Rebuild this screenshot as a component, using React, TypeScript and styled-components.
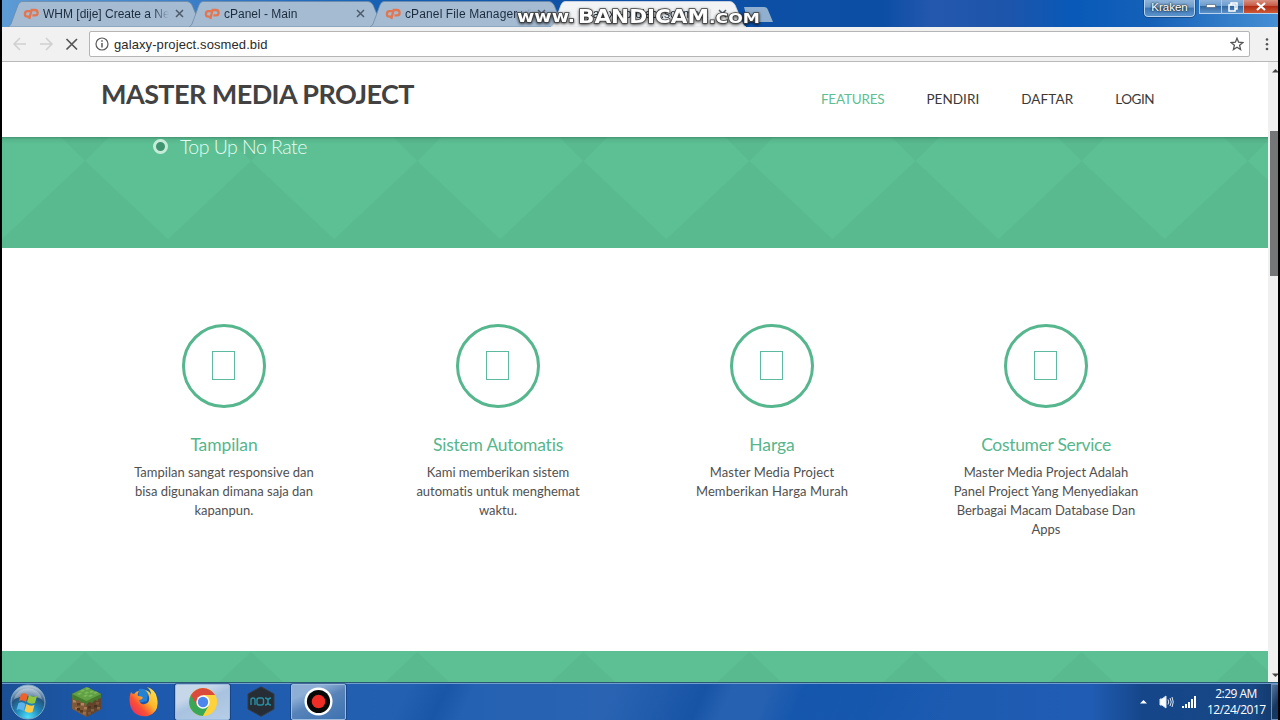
import React from 'react';
import styled, { createGlobalStyle } from 'styled-components';

const Global = createGlobalStyle`
  * { box-sizing: border-box; }
  body { margin: 0; background: #000; overflow: hidden; }
`;

const green = '#5dbf94';

const Screen = styled.div`
  position: relative;
  width: 1280px;
  height: 720px;
  display: flex;
  flex-direction: column;
  border-left: 2px solid #000;
  border-right: 2px solid #000;
  background: #fff;
  overflow: hidden;
  font-family: 'Liberation Sans', Arial, sans-serif;
`;

const TitleBar = styled.div`
  position: relative;
  display: flex;
  height: 27px;
  flex: none;
  padding-left: 6px;
  background: linear-gradient(90deg, #5d9bd5 0, #3c80c8 180px, #1560b4 380px, #0e52a8 560px, #0b4ea4 880px, #2458ae 930px, #1c55ab 1010px, #0859b8 1070px, #1561b8 1150px, #468fd4 1276px);
`;

const TabShape = styled.div<{ $width: number }>`
  position: relative;
  flex: none;
  width: ${p => p.$width}px;
  height: 26px;
  margin: 1px -14px 0 0;
  svg.shape { display: block; }
`;

const TabContent = styled.div`
  position: absolute;
  inset: 0;
  display: flex;
  align-items: center;
  padding: 0 0 1px 15px;
  color: #1c2c3d;
`;

const TabTitle = styled.span<{ $width: number; $spacing?: number }>`
  width: ${p => p.$width}px;
  margin-left: 4px;
  font-size: 12px;
  letter-spacing: ${p => p.$spacing ?? 0}px;
  line-height: 16px;
  white-space: nowrap;
  overflow: hidden;
  mask-image: linear-gradient(90deg, #000 calc(100% - 22px), transparent calc(100% - 6px));
`;

const Watermark = styled.svg`
  position: absolute;
  left: 509px;
  top: 0;
  z-index: 3;
  filter: drop-shadow(0 1px 1.5px rgba(0, 0, 0, 0.8));
`;

const WindowControls = styled.div`
  position: absolute;
  right: 0;
  top: 0;
  display: flex;
  align-items: flex-start;
`;

const UserButton = styled.div`
  width: 51px;
  height: 17px;
  margin-right: 4px;
  border: 1px solid #b9d3ec;
  border-top: 0;
  border-radius: 0 0 4px 4px;
  outline: 1px solid rgba(20, 50, 95, 0.5);
  background: linear-gradient(#8fb4da, #6c9bcd 45%, #3b74b4 50%, #5b93cc);
  color: #fff;
  font: 11.5px/15px 'Liberation Sans', Arial, sans-serif;
  text-align: center;
  text-shadow: 0 0 2px #222, 0 0 2px #222;
`;

const ControlButton = styled.div<{ $width: number; $close?: boolean }>`
  display: flex;
  align-items: center;
  justify-content: center;
  width: ${p => p.$width}px;
  height: 14px;
  border-bottom: 1px solid #b9d3ec;
  border-left: 1px solid #a9c6e4;
  background: ${p => p.$close
    ? 'linear-gradient(#d99080, #c65a45 45%, #b02c14 50%, #cf5a36)'
    : 'linear-gradient(#8db3da, #6b9bce 45%, #34699f 50%, #5a91c9)'};
`;

const Toolbar = styled.div`
  display: flex;
  align-items: center;
  height: 35px;
  flex: none;
  background: #f1f1f2;
  border-bottom: 1px solid #b9b9b9;
`;

const NavIcons = styled.div`
  display: flex;
  width: 87px;
  padding-left: 10px;
`;

const AddressBar = styled.div`
  display: flex;
  align-items: center;
  width: 1161px;
  height: 26px;
  padding: 0 5px;
  border: 1px solid #b5b5b5;
  border-radius: 2px;
  background: #fff;
`;

const Url = styled.span`
  flex: 1;
  margin-left: 5px;
  color: #2a2a2a;
  font-size: 13px;
  letter-spacing: 0.1px;
`;

const MenuIcon = styled.svg`
  margin-left: 12px;
`;

const Viewport = styled.div`
  display: flex;
  height: 620px;
  flex: none;
`;

const Page = styled.main`
  width: 1266px;
  flex: none;
  font-family: Lato, sans-serif;
  font-variant-ligatures: none;
  background: #fff;
`;

const SiteHeader = styled.header`
  display: flex;
  justify-content: space-between;
  height: 75px;
  padding: 0 114px 0 99px;
  background: #fff;
`;

const Brand = styled.h1`
  margin: 15px 0 0;
  color: #424242;
  font-size: 27px;
  line-height: 34px;
  font-weight: 700;
  letter-spacing: -0.57px;
  white-space: nowrap;
`;

const Menu = styled.nav`
  display: flex;
  gap: 42px;
  padding-top: 28px;
`;

const MenuItem = styled.a<{ $active?: boolean; $spacing: number }>`
  color: ${p => (p.$active ? green : '#3a3a3a')};
  font-size: 13.5px;
  line-height: 19px;
  letter-spacing: ${p => p.$spacing}px;
  white-space: nowrap;
`;

const GreenBand = styled.section<{ $height: number }>`
  position: relative;
  height: ${p => p.$height}px;
  background: ${green};
  overflow: hidden;
`;

const Pattern = styled.svg`
  position: absolute;
  inset: 0;
`;

const BandShadow = styled.div`
  position: absolute;
  inset: 0 0 auto;
  height: 7px;
  background: linear-gradient(rgba(30, 90, 65, 0.4), rgba(30, 90, 65, 0.1) 35%, transparent);
`;

const Bullet = styled.div`
  position: relative;
  display: flex;
  align-items: center;
  height: 19px;
  padding-left: 151px;
  color: #e4fbf0;
  font-size: 19.5px;
  font-weight: 300;
  line-height: 19px;
  letter-spacing: -0.53px;
`;

const BulletDot = styled.i`
  width: 15px;
  height: 15px;
  margin-right: 12px;
  border: 3px solid #c5ecd9;
  border-radius: 50%;
  background: #409470;
`;

const Features = styled.section`
  display: grid;
  grid-template-columns: repeat(4, 274px);
  height: 403px;
  padding: 75px 0 0 85px;
`;

const Feature = styled.article`
  display: flex;
  flex-direction: column;
  align-items: center;
`;

const IconRing = styled.div`
  display: flex;
  align-items: center;
  justify-content: center;
  width: 84px;
  height: 84px;
  margin-top: 1px;
  border: 3px solid #56b68d;
  border-radius: 50%;
`;

const MissingGlyph = styled.i`
  width: 23px;
  height: 29px;
  margin: 0 1px 1px 0;
  border: 1px solid #5dbaa0;
`;

const FeatureTitle = styled.h3<{ $spacing: number }>`
  margin: 25px 0 6px;
  color: #56b68d;
  font-size: 17.5px;
  line-height: 24px;
  font-weight: 400;
  letter-spacing: ${p => p.$spacing}px;
  white-space: nowrap;
`;

const FeatureText = styled.p<{ $spacing?: number }>`
  margin: 0;
  color: #505050;
  font-size: 13px;
  line-height: 18.9px;
  letter-spacing: ${p => p.$spacing ?? 0}px;
  text-align: center;
  white-space: pre-line;
`;

const ScrollTrack = styled.div`
  display: flex;
  flex-direction: column;
  justify-content: space-between;
  width: 10px;
  padding: 6px 0 4px;
  background: #f0f0f0;
`;

const ScrollThumb = styled.div`
  width: 8px;
  height: 145px;
  margin: 58px 0 auto 2px;
  background: #757677;
`;

const Taskbar = styled.footer`
  display: flex;
  align-items: center;
  height: 38px;
  flex: none;
  border-top: 1px solid #2a5a73;
  box-shadow: inset 0 1px #6f9cce;
  background:
    linear-gradient(115deg, transparent 370px, rgba(14, 75, 158, 0.5) 405px, transparent 430px, transparent 560px, rgba(14, 75, 158, 0.6) 640px, transparent 665px, transparent 700px, rgba(10, 80, 170, 0.5) 730px, transparent 870px),
    linear-gradient(90deg, #1b4f94 0, #1c59ac 110px, #2360b2 400px, #2963b2 600px, #2560b1 760px, #1a5aaf 860px, #205cb3 1090px, #15468a 1140px, #174784 1250px, #123766 1276px);
`;

const TaskSlot = styled.div<{ $open?: boolean; $bright?: boolean; $width: number; $after?: number }>`
  display: flex;
  align-items: center;
  justify-content: center;
  width: ${p => p.$width}px;
  height: 36px;
  margin-right: ${p => p.$after ?? 0}px;
  border: 1px solid ${p => (p.$open ? '#9dbddf' : 'transparent')};
  border-radius: 2px;
  background: ${p => p.$bright
    ? 'linear-gradient(155deg, #c7d7ea 30%, #a8c2e0 50%, #b6cde6)'
    : p.$open ? 'linear-gradient(155deg, #8daed5 25%, #5783b9 50%, #3d72b0)' : 'none'};
  box-shadow: ${p => (p.$open ? '0 0 0 1px rgba(15,45,90,.45)' : 'none')};
`;

const Tray = styled.div`
  display: flex;
  align-items: center;
  margin-left: auto;
`;

const TrayIcon = styled.svg<{ $after: number }>`
  margin-right: ${p => p.$after}px;
`;

const Clock = styled.div`
  width: 58px;
  margin-right: 6px;
  color: #fff;
  font: 12px/16px 'Open Sans', sans-serif;
  letter-spacing: -0.5px;
  text-align: center;
  white-space: nowrap;
`;

const ShowDesktop = styled.div`
  width: 7px;
  height: 36px;
  border: 1px solid #6d8db5;
  border-right: 0;
  background: linear-gradient(120deg, #54779f, #16375f 60%);
`;

function CpLogo() {
  return (
    <svg width="16" height="12" viewBox="0 0 16 12" fill="none" stroke="#e27650" strokeWidth="2.3">
      <path d="M7.6 3.2H4.6a2.700 2.700 0 0 0 0 5.4h1.6" />
      <path d="M6.3 11 8.6 2h3.3a2.600 2.600 0 0 1 0 5.4H9.4" />
    </svg>
  );
}

function CloseMark() {
  return (
    <svg width="9" height="9" viewBox="0 0 9 9" stroke="#4d5b6b" strokeWidth="1.5">
      <path d="m1 1 7 7M8 1 1 8" />
    </svg>
  );
}

function Tab({ title, width, spacing, active }: { title: string; width: number; spacing?: number; active?: boolean }) {
  const w = width;
  return (
    <TabShape $width={w}>
      <svg className="shape" width={w} height="26">
        <path
          d={`M0 26Q2 25 3 23L10 4Q11.500 .5 14 .5H${w - 16}Q${w - 13} .5 ${w - 11} 4L${w - 3} 23Q${w - 2} 25 ${w} 26Z`}
          fill={active ? '#f2f3f4' : '#a5bbd2'}
          stroke={active ? '#d4dbe3' : '#6f8ba9'}
          strokeWidth=".8"
        />
      </svg>
      <TabContent>
        {active ? <svg width="16" height="12" /> : <CpLogo />}
        <TabTitle $width={132} $spacing={spacing}>{title}</TabTitle>
        <CloseMark />
      </TabContent>
    </TabShape>
  );
}

function Triangles({ apexY, baseY, top }: { apexY: number; baseY: number; top?: boolean }) {
  const apexes = Array.from({ length: 9 }, (_, i) => 83 + i * 166.1);
  const half = baseY - apexY;
  return (
    <Pattern width="1266" height="111">
      {apexes.map(x => (
        <g key={x}>
          <path d={`M${x} ${apexY}l${half * 1.06} ${half}H${x - half * 1.06}Z`} fill="#59b98f" />
          {top && <path d={`M${x} ${apexY}l-24-24h48Z`} fill="#59b98f" />}
        </g>
      ))}
      {top && <path d="M0 102h1266v9H0Z" fill="#59b98f" />}
    </Pattern>
  );
}

function StartOrb() {
  return (
    <svg width="36" height="36" viewBox="0 0 36 36">
      <defs>
        <radialGradient id="orb" cx=".5" cy=".95" r=".9">
          <stop offset="0" stopColor="#4fe0fb" />
          <stop offset=".4" stopColor="#2089bb" />
          <stop offset=".7" stopColor="#25557f" />
          <stop offset="1" stopColor="#b0c5d8" />
        </radialGradient>
      </defs>
      <circle cx="18" cy="18" r="17" fill="url(#orb)" stroke="#7faac4" />
      <path d="M4 15a14.500 14.500 0 0 1 28 0Q18 9 4 15Z" fill="#fff" opacity=".33" />
      <path d="M11 10q4-2 7 1l-2 7q-4-3-7-1Z" fill="#ed622c" />
      <path d="M19 11q4 3 8 1l-2 7q-4 2-8-1Z" fill="#93c73f" />
      <path d="M8.500 19q4-2 7 1l-2 7q-4-3-7-1Z" fill="#5db4ed" />
      <path d="M16.500 20q4 3 8 1l-2 7q-4 2-8-1Z" fill="#fbc943" />
    </svg>
  );
}

function GrassBlock() {
  const specks = [[1, 13, '#b08761'], [5, 16, '#5c3c25'], [9, 16, '#b08761'], [3, 20, '#9a7049'], [8, 23, '#59391f'], [12, 20, '#a47a52'], [16, 19, '#513620'], [19, 22, '#80603f'], [24, 15, '#7b573a'], [22, 18, '#49301d'], [25, 20, '#8b6545'], [16, 25, '#78553a'], [5, 21, '#4f331d'], [11, 25, '#9a7049']] as const;
  const blades = [[8, 4], [13, 2], [17, 5], [21, 6], [5, 7], [11, 9], [16, 9], [12, 6]];
  return (
    <svg width="29" height="30" viewBox="0 0 29 30">
      <path d="m0 7 14.500-7L29 7v15l-14.500 8L0 22Z" fill="#805939" />
      <path d="M14.500 14 29 7v15l-14.500 8Z" fill="#62432b" />
      {specks.map(([x, y, c]) => <rect key={`${x}-${y}`} x={x} y={y} width="3" height="2.500" fill={c} />)}
      <path d="m0 7 14.500-7L29 7v4l-3 1v2l-3-1-3 3-3-1-2.500 3-3-3-2 1-3-3-3 1-3-3-1.500 1Z" fill="#467b2d" />
      <path d="m0 7 14.500-7L29 7l-14.500 7Z" fill="#61a044" />
      {blades.map(([x, y]) => <path key={`${x}-${y}`} d={`m${x} ${y} 3-1.400 2 1-3 1.400Z`} fill="#7cb95a" />)}
    </svg>
  );
}

function Firefox() {
  return (
    <svg width="30" height="30" viewBox="0 0 30 30">
      <defs>
        <linearGradient id="fox" x1="1" y1="0" x2="0" y2="1">
          <stop offset="0" stopColor="#fff04f" />
          <stop offset=".42" stopColor="#ffb52c" />
          <stop offset=".65" stopColor="#fa5233" />
          <stop offset="1" stopColor="#e51e75" />
        </linearGradient>
      </defs>
      <circle cx="15" cy="14" r="11.500" fill="#1957b5" />
      <path d="M10 2q7-1 9 4l-1 8-9 2Z" fill="#2482d5" />
      <path d="M2 5q1 2 3 2 2-3 5-3-2 3-1 5 4 0 5 2-2 2-4 2 1 5 6 4 5-1 4-7-1-5-4-7 5 1 6 5Q22 3 18 0q9 3 10 11 3 14-9 18-12 2-17-8Q-1 12 2 5Z" fill="url(#fox)" />
    </svg>
  );
}

function Chrome() {
  return (
    <svg width="28" height="28" viewBox="0 0 28 28">
      <circle cx="14" cy="14" r="14" fill="#fdd23b" />
      <path d="M14 14 1.900 7A14 14 0 0 0 14 28l6-10.500Z" fill="#3aa757" />
      <path d="M1.900 7A14 14 0 0 1 26.100 7H14v7L8 17.500Z" fill="#db4b3c" />
      <path d="M26.100 7.500A14 14 0 0 1 14 28l6-10.500V7.500Z" fill="#fdd23b" />
      <circle cx="14" cy="14" r="6.700" fill="#fff" />
      <circle cx="14" cy="14" r="5.200" fill="#4b87ed" />
    </svg>
  );
}

function Nox() {
  return (
    <svg width="28" height="31" viewBox="0 0 28 31" fill="none">
      <path d="M14 .8 27 8v15l-13 7.300L1 23V8Z" fill="#272d34" stroke="#353c42" />
      <path d="M4 19v-5q0-2 2-2t2 2v5M12 12h2.500q2 0 2 2v3q0 2-2 2H12q-2 0-2-2v-3q0-2 2-2ZM18 12q3 0 3 3.500T24 19M24 12q-3 0-3 3.500T18 19" stroke="#278fa3" strokeWidth="1.400" />
    </svg>
  );
}

function Recorder() {
  return (
    <svg width="29" height="29" viewBox="0 0 30 30">
      <circle cx="15" cy="15" r="14.500" fill="#fff" />
      <circle cx="15" cy="15" r="12" fill="#080808" />
      <circle cx="15" cy="15" r="7" fill="#ed2d26" />
    </svg>
  );
}

const menu = [
  { label: 'FEATURES', spacing: -0.2 },
  { label: 'PENDIRI', spacing: 0.05 },
  { label: 'DAFTAR', spacing: 0.1 },
  { label: 'LOGIN', spacing: -0.5 },
];

const features = [
  { title: 'Tampilan', spacing: -0.1, text: 'Tampilan sangat responsive dan\nbisa digunakan dimana saja dan\nkapanpun.' },
  { title: 'Sistem Automatis', spacing: -0.22, text: 'Kami memberikan sistem\nautomatis untuk menghemat\nwaktu.' },
  { title: 'Harga', spacing: -0.1, text: 'Master Media Project\nMemberikan Harga Murah', textSpacing: 0.1 },
  { title: 'Costumer Service', spacing: -0.33, text: 'Master Media Project Adalah\nPanel Project Yang Menyediakan\nBerbagai Macam Database Dan\nApps' },
];

export default function App() {
  return (
    <>
      <Global />
      <Screen>
        <TitleBar>
          <Tab title="WHM [dije] Create a New" width={195} />
          <Tab title="cPanel - Main" width={195} />
          <Tab title="cPanel File Manager v3" width={195} spacing={0.12} />
          <Tab title="galaxy-project.sosmed.bid" width={195} active />
          <svg width="44" height="27">
            <path d="M12 7h20q3 0 4 3l5 12H16Z" fill="#91b0cf" />
          </svg>
          <Watermark width="260" height="30" fill="#fff" stroke="#3c3c3c" strokeWidth="1.400" paintOrder="stroke" fontFamily="DejaVu Sans, sans-serif" fontWeight="700">
            <text x="6" y="22" fontSize="15" textLength="58" lengthAdjust="spacingAndGlyphs">www.</text>
            <text x="67" y="23" fontSize="20" textLength="131" lengthAdjust="spacingAndGlyphs">BANDICAM</text>
            <text x="198" y="22.500" fontSize="14" textLength="51" lengthAdjust="spacingAndGlyphs">.COM</text>
          </Watermark>
          <WindowControls>
            <UserButton>Kraken</UserButton>
            <ControlButton $width={22}>
              <svg width="10" height="5"><path d="M.5.5h9v3h-9Z" fill="#fff" stroke="#45566b" strokeWidth=".6" /></svg>
            </ControlButton>
            <ControlButton $width={22}>
              <svg width="10" height="10" fill="none" stroke="#fff" strokeWidth="1.500"><path d="M3 3V1h6v6H7M1 3h6v6H1Z" /></svg>
            </ControlButton>
            <ControlButton $width={35} $close>
              <svg width="10" height="9" stroke="#fff" strokeWidth="2.200"><path d="m1 1 8 7M9 1 1 8" /></svg>
            </ControlButton>
          </WindowControls>
        </TitleBar>
        <Toolbar>
          <NavIcons>
            <svg width="70" height="16" fill="none" strokeWidth="1.500">
              <path d="M14 8H2M8 2 2 8l6 6M28 8h12M34 2l6 6-6 6" stroke="#d0d0d0" />
              <path d="m54.500 3 10.500 10.500M65 3 54.500 13.500" stroke="#555" strokeWidth="1.700" />
            </svg>
          </NavIcons>
          <AddressBar>
            <svg width="14" height="14" viewBox="0 0 14 14" fill="none" stroke="#5a5a5a" strokeWidth="1.200">
              <circle cx="7" cy="7" r="6" /><path d="M7 6v4.500M7 3.200v1.600" strokeWidth="1.500" />
            </svg>
            <Url>galaxy-project.sosmed.bid</Url>
            <svg width="14" height="14" viewBox="0 0 14 14" fill="none" stroke="#555" strokeWidth="1.300">
              <path d="m7 1.200 1.600 4 4.300.3-3.300 2.800 1 4.200L7 10.200l-3.600 2.300 1-4.200-3.300-2.800 4.300-.3Z" />
            </svg>
          </AddressBar>
          <MenuIcon width="10" height="14" fill="#555">
            <circle cx="5" cy="2.500" r="1.300" /><circle cx="5" cy="7.200" r="1.300" /><circle cx="5" cy="12" r="1.300" />
          </MenuIcon>
        </Toolbar>
        <Viewport>
          <Page>
            <SiteHeader>
              <Brand>MASTER MEDIA PROJECT</Brand>
              <Menu>
                {menu.map((m, i) => (
                  <MenuItem key={m.label} $active={i === 0} $spacing={m.spacing}>{m.label}</MenuItem>
                ))}
              </Menu>
            </SiteHeader>
            <GreenBand $height={111}>
              <Triangles apexY={24} baseY={102} top />
              <BandShadow />
              <Bullet><BulletDot />Top Up No Rate</Bullet>
            </GreenBand>
            <Features>
              {features.map(f => (
                <Feature key={f.title}>
                  <IconRing><MissingGlyph /></IconRing>
                  <FeatureTitle $spacing={f.spacing}>{f.title}</FeatureTitle>
                  <FeatureText $spacing={f.textSpacing}>{f.text}</FeatureText>
                </Feature>
              ))}
            </Features>
            <GreenBand $height={31}>
              <Triangles apexY={1} baseY={31} />
            </GreenBand>
          </Page>
          <ScrollTrack>
            <svg width="10" height="5"><path d="M4 4.500 7.500 1 11 4.500Z" fill="#444" /></svg>
            <ScrollThumb />
            <svg width="10" height="5"><path d="M4 .5 7.500 4 11 .5Z" fill="#444" /></svg>
          </ScrollTrack>
        </Viewport>
        <Taskbar>
          <TaskSlot $width={52}><StartOrb /></TaskSlot>
          <TaskSlot $width={64}><GrassBlock /></TaskSlot>
          <TaskSlot $width={52} $after={5}><Firefox /></TaskSlot>
          <TaskSlot $width={55} $open $bright><Chrome /></TaskSlot>
          <TaskSlot $width={61}><Nox /></TaskSlot>
          <TaskSlot $width={55} $open><Recorder /></TaskSlot>
          <Tray>
            <TrayIcon $after={12} width="7" height="5"><path d="M0 4.500 3.500 1 7 4.500Z" fill="#fff" /></TrayIcon>
            <TrayIcon $after={8} width="15" height="14" viewBox="0 0 15 14" fill="none" stroke="#dce8f5">
              <path d="M1 4h2l4-3v12l-4-3H1Z" fill="#fff" /><path d="M9 4.500q1.500 2.500 0 5M11 3q2.500 4 0 8M13 2q2.500 5 0 10" />
            </TrayIcon>
            <TrayIcon $after={10} width="15" height="12" fill="#fff">
              <path d="M0 10h2v2H0ZM3 8h2v4H3ZM6 6h2v6H6ZM9 3h2v9H9ZM12 0h2v12h-2Z" />
            </TrayIcon>
            <Clock>2:29 AM<br />12/24/2017</Clock>
            <ShowDesktop />
          </Tray>
        </Taskbar>
      </Screen>
    </>
  );
}
